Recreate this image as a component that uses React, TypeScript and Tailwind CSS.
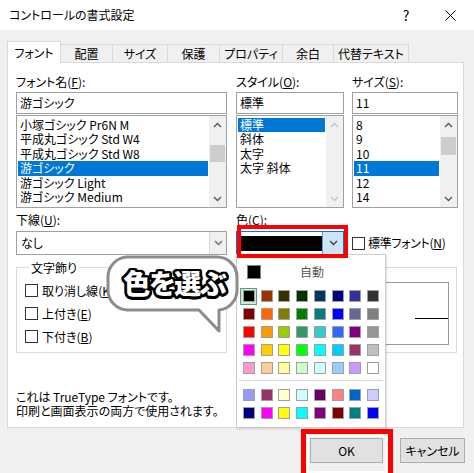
import React from 'react';

const palette: string[][] = [
  ['#000000', '#993300', '#333300', '#003300', '#003366', '#000080', '#333399', '#333333'],
  ['#800000', '#FF6600', '#808000', '#008000', '#008080', '#0000FF', '#666699', '#808080'],
  ['#FF0000', '#FF9900', '#99CC00', '#339966', '#33CCCC', '#3366FF', '#800080', '#969696'],
  ['#FF00FF', '#FFCC00', '#FFFF00', '#00FF00', '#00FFFF', '#00CCFF', '#993366', '#C0C0C0'],
  ['#FF99CC', '#FFCC99', '#FFFF99', '#CCFFCC', '#CCFFFF', '#99CCFF', '#CC99FF', '#FFFFFF'],
];

const customColors: string[][] = [
  ['#9999FF', '#993366', '#FFFFCC', '#CCFFFF', '#660066', '#FF8080', '#0066CC', '#CCCCFF'],
  ['#000080', '#FF00FF', '#FFFF00', '#00FFFF', '#800080', '#800000', '#008080', '#0000FF'],
];

const tabs = [
  { label: '配置', w: 'w-[52px]' },
  { label: 'サイズ', w: 'w-[55px]' },
  { label: '保護', w: 'w-[52px]' },
  { label: 'プロパティ', w: 'w-[63px]' },
  { label: '余白', w: 'w-[51px]' },
  { label: '代替テキスト', w: 'w-[75px]' },
];

function Chevron({ up = false, color = '#606060' }: { up?: boolean; color?: string }) {
  return (
    <svg width="9" height="6" viewBox="0 0 9 6" className={up ? 'rotate-180' : ''}>
      <path d="M1 1 L4.5 4.5 L8 1" fill="none" stroke={color} strokeWidth="1.4" />
    </svg>
  );
}

function ScrollBar({ thumb, disabled = false }: { thumb?: string; disabled?: boolean }) {
  const c = disabled ? '#c4c4c4' : '#555555';
  return (
    <div className="w-[17px] h-full flex flex-col bg-[#f0f0f0]">
      <div className="h-[17px] flex items-center justify-center">
        <Chevron up color={c} />
      </div>
      <div className="flex-1 px-[1px]">{thumb && <div className={`bg-[#cdcdcd] ${thumb}`} />}</div>
      <div className="h-[17px] flex items-center justify-center">
        <Chevron color={c} />
      </div>
    </div>
  );
}

function ListBox({
  items,
  selected,
  width,
  thumb,
  disabled,
}: {
  items: string[];
  selected: number;
  width: string;
  thumb?: string;
  disabled?: boolean;
}) {
  return (
    <div className={`${width} h-[93px] mt-[1px] border border-[#a0a0a0] flex`}>
      <div className="flex-1 pt-[1.5px] px-[1px]">
        {items.map((item, i) => (
          <div
            key={item}
            className={`h-[14.5px] leading-[14.5px] pl-[2px] whitespace-nowrap ${
              i === selected ? 'bg-[#0078d7] text-white' : ''
            }`}
          >
            {item}
          </div>
        ))}
      </div>
      <ScrollBar thumb={thumb} disabled={disabled} />
    </div>
  );
}

function TextBox({ value, width }: { value: string; width: string }) {
  return (
    <div className={`${width} h-[22px] border border-[#a0a0a0] pl-[3px] leading-[20px]`}>{value}</div>
  );
}

function Label({ text, k }: { text: string; k: string }) {
  return (
    <div className="h-[17px] leading-[17px] whitespace-nowrap">
      {text}(<span className="underline">{k}</span>):
    </div>
  );
}

function CheckBox({ text, k }: { text: string; k: string }) {
  return (
    <div className="h-[23px] flex items-center gap-[4px] whitespace-nowrap">
      <div className="w-[13px] h-[13px] border border-[#333333] bg-white" />
      <span>
        {text}(<span className="underline">{k}</span>)
      </span>
    </div>
  );
}

function Swatch({ color }: { color: string }) {
  return <div className="w-[12px] h-[12px] border border-[#a0a0a0]" style={{ backgroundColor: color }} />;
}

function ColorPopup() {
  return (
    <div className="absolute left-[236px] top-[254px] z-20 w-[150px] h-[174px] bg-white border border-[#cccccc] shadow-[1px_1px_2px_rgba(0,0,0,0.15)]">
      <div className="mt-[10px] h-[14px] flex items-center">
        <div className="ml-[10px] w-[14px] h-[14px] bg-black border border-[#808080]" />
        <div className="ml-[39px] text-[#555555] leading-[14px]">自動</div>
      </div>
      <div className="mt-[8px] ml-[3px] w-[142px] grid grid-cols-8">
        {palette.flat().map((c, i) => (
          <div key={i} className="h-[18px] flex items-center justify-center">
            {i === 0 ? (
              <div className="w-[17px] h-[17px] border border-[#5e9c7e] bg-[#cfe8dc] flex items-center justify-center">
                <Swatch color={c} />
              </div>
            ) : (
              <Swatch color={c} />
            )}
          </div>
        ))}
      </div>
      <div className="mt-[3px] mx-[2px] h-px bg-[#d7d7d7]" />
      <div className="mt-[5px] ml-[3px] w-[142px] grid grid-cols-8">
        {customColors.flat().map((c, i) => (
          <div key={i} className="h-[18px] flex items-center justify-center">
            <Swatch color={c} />
          </div>
        ))}
      </div>
    </div>
  );
}

function Bubble() {
  return (
    <div className="absolute left-[105px] top-[254px] z-30 w-[136px] h-[82px]">
      <svg width="136" height="82" viewBox="0 0 136 82" className="absolute inset-0">
        <path
          d="M22 3 H112 A20 20 0 0 1 132 23 V36 A20 20 0 0 1 114 56 L114 77 L94 56 H22 A20 20 0 0 1 3 36 V23 A20 20 0 0 1 22 3 Z"
          fill="#ffffff"
          stroke="#8c8c8c"
          strokeWidth="3"
          strokeLinejoin="round"
        />
      </svg>
      <div className="relative h-[58px] flex items-center justify-center pl-[3px] text-[27px] font-black text-white tracking-[-1px] [text-shadow:2.5px_0_0_#000,-2.5px_0_0_#000,0_2.5px_0_#000,0_-2.5px_0_#000,2px_2px_0_#000,-2px_-2px_0_#000,2px_-2px_0_#000,-2px_2px_0_#000,1px_2.5px_0_#000,2.5px_1px_0_#000,-1px_2.5px_0_#000,-2.5px_1px_0_#000,1px_-2.5px_0_#000,2.5px_-1px_0_#000,-1px_-2.5px_0_#000,-2.5px_-1px_0_#000]">
        色を選ぶ
      </div>
    </div>
  );
}

export default function App() {
  return (
    <div className="relative w-[474px] h-[473px] overflow-hidden bg-[#f0f0f0] text-[12px] text-black font-['Noto_Sans_CJK_JP',sans-serif] [font-feature-settings:'palt']">
      {/* Title bar */}
      <div className="h-[30px] bg-white flex items-center pl-[9px]">
        <span>コントロールの書式設定</span>
        <div className="ml-auto flex pr-[2px]">
          <div className="w-[44px] text-center text-[14px]">?</div>
          <div className="w-[44px] flex items-center justify-center">
            <svg width="11" height="11" viewBox="0 0 11 11">
              <path d="M0.5 0.5 L10.5 10.5 M10.5 0.5 L0.5 10.5" stroke="#000" strokeWidth="1" />
            </svg>
          </div>
        </div>
      </div>

      {/* Tabs */}
      <div className="mt-[11px] pl-[7px] h-[21px] flex items-end">
        <div className="relative z-10 w-[54px] h-[22px] -mb-px bg-white border border-b-0 border-[#d9d9d9] flex items-center justify-center">
          フォント
        </div>
        {tabs.map((t) => (
          <div
            key={t.label}
            className={`${t.w} h-[18px] border-t border-r border-[#d9d9d9] flex items-center justify-center pt-px`}
          >
            {t.label}
          </div>
        ))}
      </div>

      {/* Panel */}
      <div className="ml-[7px] w-[457px] h-[366px] bg-white border border-[#d9d9d9] pl-[8px] pt-[10px]">
        <div className="flex">
          <div className="w-[211px]">
            <Label text="フォント名" k="F" />
            <div className="mt-[2px]" />
            <TextBox value="游ゴシック" width="w-[211px]" />
            <ListBox
              width="w-[211px]"
              items={['小塚ゴシック Pr6N M', '平成丸ゴシック Std W4', '平成丸ゴシック Std W8', '游ゴシック', '游ゴシック Light', '游ゴシック Medium']}
              selected={3}
              thumb="mt-[12px] h-[17px]"
            />
          </div>
          <div className="w-[108px] ml-[9px]">
            <Label text="スタイル" k="O" />
            <div className="mt-[2px]" />
            <TextBox value="標準" width="w-[108px]" />
            <ListBox width="w-[108px]" items={['標準', '斜体', '太字', '太字 斜体']} selected={0} disabled />
          </div>
          <div className="w-[106px] ml-[8px]">
            <Label text="サイズ" k="S" />
            <div className="mt-[2px]" />
            <TextBox value="11" width="w-[106px]" />
            <ListBox
              width="w-[106px]"
              items={['8', '9', '10', '11', '12', '14']}
              selected={3}
              thumb="mt-[4px] h-[18px]"
            />
          </div>
        </div>

        {/* Underline / colour row */}
        <div className="flex mt-[3px]">
          <div className="w-[211px]">
            <Label text="下線" k="U" />
            <div className="mt-[3px] h-[24px] border border-[#a0a0a0] flex">
              <div className="flex-1 pl-[4px] leading-[22px]">なし</div>
              <div className="w-[17px] bg-[#f0f0f0] border-l border-[#d9d9d9] flex items-center justify-center">
                <Chevron color="#707070" />
              </div>
            </div>
          </div>
          <div className="w-[108px] ml-[9px]">
            <Label text="色" k="C" />
            <div className="mt-[3px] h-[24px] border border-[#0078d7] flex">
              <div className="flex-1 pl-[2px] pt-[4px] pb-[3px]">
                <div className="h-full bg-black" />
              </div>
              <div className="w-[21px] bg-[#cce4f7] border-l border-[#569de5] flex items-center justify-center">
                <Chevron color="#404040" />
              </div>
            </div>
          </div>
          <div className="w-[106px] ml-[8px] pt-[20px]">
            <div className="h-[24px] flex items-center gap-[3px] whitespace-nowrap tracking-[-0.3px]">
              <div className="w-[13px] h-[13px] border border-[#333333] bg-white" />
              <span>
                標準フォント(<span className="underline">N</span>)
              </span>
            </div>
          </div>
        </div>

        {/* Effects / preview row */}
        <div className="flex mt-[4px]">
          <fieldset className="w-[211px] h-[94px] border border-[#dcdcdc] pl-[8px]">
            <legend className="ml-[4px] px-[2px] leading-[17px]">文字飾り</legend>
            <div className="pt-[3px]">
              <CheckBox text="取り消し線" k="K" />
              <CheckBox text="上付き" k="E" />
              <CheckBox text="下付き" k="B" />
            </div>
          </fieldset>
          <fieldset className="w-[221px] h-[94px] ml-[9px] border border-[#dcdcdc] px-[7px]">
            <legend className="ml-[4px] px-[2px] leading-[17px]">プレビュー</legend>
            <div className="mt-[6px] h-[63px] border border-[#999999] flex items-center justify-end">
              <div className="w-[33px] h-px bg-black mt-[9px]" />
            </div>
          </fieldset>
        </div>

        <div className="mt-[37px] leading-[14px]">
          <div>これは TrueType フォントです。</div>
          <div>印刷と画面表示の両方で使用されます。</div>
        </div>
      </div>

      {/* Buttons */}
      <div className="mt-[10px] flex justify-end pr-[9px] gap-[17px]">
        <div className="w-[73px] h-[25px] bg-[#e1e1e1] border border-[#adadad] flex items-center justify-center">OK</div>
        <div className="w-[65px] h-[25px] bg-[#e1e1e1] border border-[#adadad] flex items-center justify-center">
          キャンセル
        </div>
      </div>

      <ColorPopup />
      <Bubble />

      {/* Red highlight boxes */}
      <div className="absolute left-[237px] top-[225px] z-30 w-[111px] h-[33px] border-4 border-[#ff0000]" />
      <div className="absolute left-[301px] top-[429px] z-30 w-[92px] h-[50px] border-[5px] border-[#ff0000] shadow-[inset_0_0_0_3px_#ffffff]" />
    </div>
  );
}
